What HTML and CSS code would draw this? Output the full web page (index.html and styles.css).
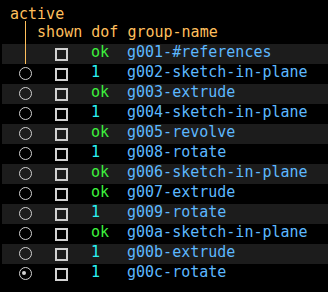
FILE: index.html
```html
<!DOCTYPE html>
<html lang="en">
<head>
    <meta charset="UTF-8">
    <title>Groups</title>
    <link rel="stylesheet" href="styles.css">
</head>
<body>
    <div class="window">
        <div class="header">
            <pre>active
   shown dof group-name</pre>
            <span class="active-line"></span>
        </div>

        <div class="rows">
            <div class="row band">
                <div class="cell act"></div>
                <div class="cell shown"><span class="check"></span></div>
                <div class="cell dof ok">ok</div>
                <div class="cell name">g001-#references</div>
            </div>
            <div class="row">
                <div class="cell act"><span class="radio"></span></div>
                <div class="cell shown"><span class="check"></span></div>
                <div class="cell dof one">1</div>
                <div class="cell name">g002-sketch-in-plane</div>
            </div>
            <div class="row band">
                <div class="cell act"><span class="radio"></span></div>
                <div class="cell shown"><span class="check"></span></div>
                <div class="cell dof ok">ok</div>
                <div class="cell name">g003-extrude</div>
            </div>
            <div class="row">
                <div class="cell act"><span class="radio"></span></div>
                <div class="cell shown"><span class="check"></span></div>
                <div class="cell dof one">1</div>
                <div class="cell name">g004-sketch-in-plane</div>
            </div>
            <div class="row band">
                <div class="cell act"><span class="radio"></span></div>
                <div class="cell shown"><span class="check"></span></div>
                <div class="cell dof ok">ok</div>
                <div class="cell name">g005-revolve</div>
            </div>
            <div class="row">
                <div class="cell act"><span class="radio"></span></div>
                <div class="cell shown"><span class="check"></span></div>
                <div class="cell dof one">1</div>
                <div class="cell name">g008-rotate</div>
            </div>
            <div class="row band">
                <div class="cell act"><span class="radio"></span></div>
                <div class="cell shown"><span class="check"></span></div>
                <div class="cell dof ok">ok</div>
                <div class="cell name">g006-sketch-in-plane</div>
            </div>
            <div class="row">
                <div class="cell act"><span class="radio"></span></div>
                <div class="cell shown"><span class="check"></span></div>
                <div class="cell dof ok">ok</div>
                <div class="cell name">g007-extrude</div>
            </div>
            <div class="row band">
                <div class="cell act"><span class="radio"></span></div>
                <div class="cell shown"><span class="check"></span></div>
                <div class="cell dof one">1</div>
                <div class="cell name">g009-rotate</div>
            </div>
            <div class="row">
                <div class="cell act"><span class="radio"></span></div>
                <div class="cell shown"><span class="check"></span></div>
                <div class="cell dof ok">ok</div>
                <div class="cell name">g00a-sketch-in-plane</div>
            </div>
            <div class="row band">
                <div class="cell act"><span class="radio"></span></div>
                <div class="cell shown"><span class="check"></span></div>
                <div class="cell dof one">1</div>
                <div class="cell name">g00b-extrude</div>
            </div>
            <div class="row">
                <div class="cell act"><span class="radio selected"></span></div>
                <div class="cell shown"><span class="check"></span></div>
                <div class="cell dof one">1</div>
                <div class="cell name">g00c-rotate</div>
            </div>
        </div>
    </div>
</body>
</html>
```

FILE: styles.css
```css
body {
    margin: 0;
    background: #000;
    font-family: 'DejaVu Sans Mono', 'Liberation Mono', monospace;
    font-size: 15px;
    width: 328px;
    height: 292px;
    overflow: hidden;
}

.window {
    position: relative;
}

.header {
    position: relative;
    padding: 5px 0 0 10px;
    margin-bottom: 3px;
}

.header pre {
    margin: 0;
    font: inherit;
    line-height: 18px;
    color: #ffbf5c;
}

.active-line {
    position: absolute;
    left: 25px;
    top: 21px;
    width: 1px;
    height: 43px;
    background: #ffbf5c;
    z-index: 2;
}

.row {
    display: grid;
    grid-template-columns: 46px 43px 36px 1fr;
    height: 20px;
    margin-left: 2px;
    line-height: 17px;
    white-space: pre;
}

.row.band {
    background: #1c1c1c;
}

.cell.act {
    display: flex;
    justify-content: center;
    padding-top: 3px;
}

.cell.shown {
    padding: 4px 0 0 7px;
}

.radio {
    display: block;
    position: relative;
    width: 13px;
    height: 13px;
    box-sizing: border-box;
    border: 1.8px solid #d2d2d2;
    border-radius: 50%;
}

.radio.selected::after {
    content: "";
    position: absolute;
    left: 2.7px;
    top: 2.7px;
    width: 4px;
    height: 4px;
    border-radius: 50%;
    background: #d2d2d2;
}

.check {
    display: block;
    width: 13px;
    height: 13px;
    box-sizing: border-box;
    border: 2px solid #d2d2d2;
}

.ok {
    color: #3df23d;
}

.one {
    color: #2af2f2;
}

.name {
    color: #5cb8ff;
}
```
